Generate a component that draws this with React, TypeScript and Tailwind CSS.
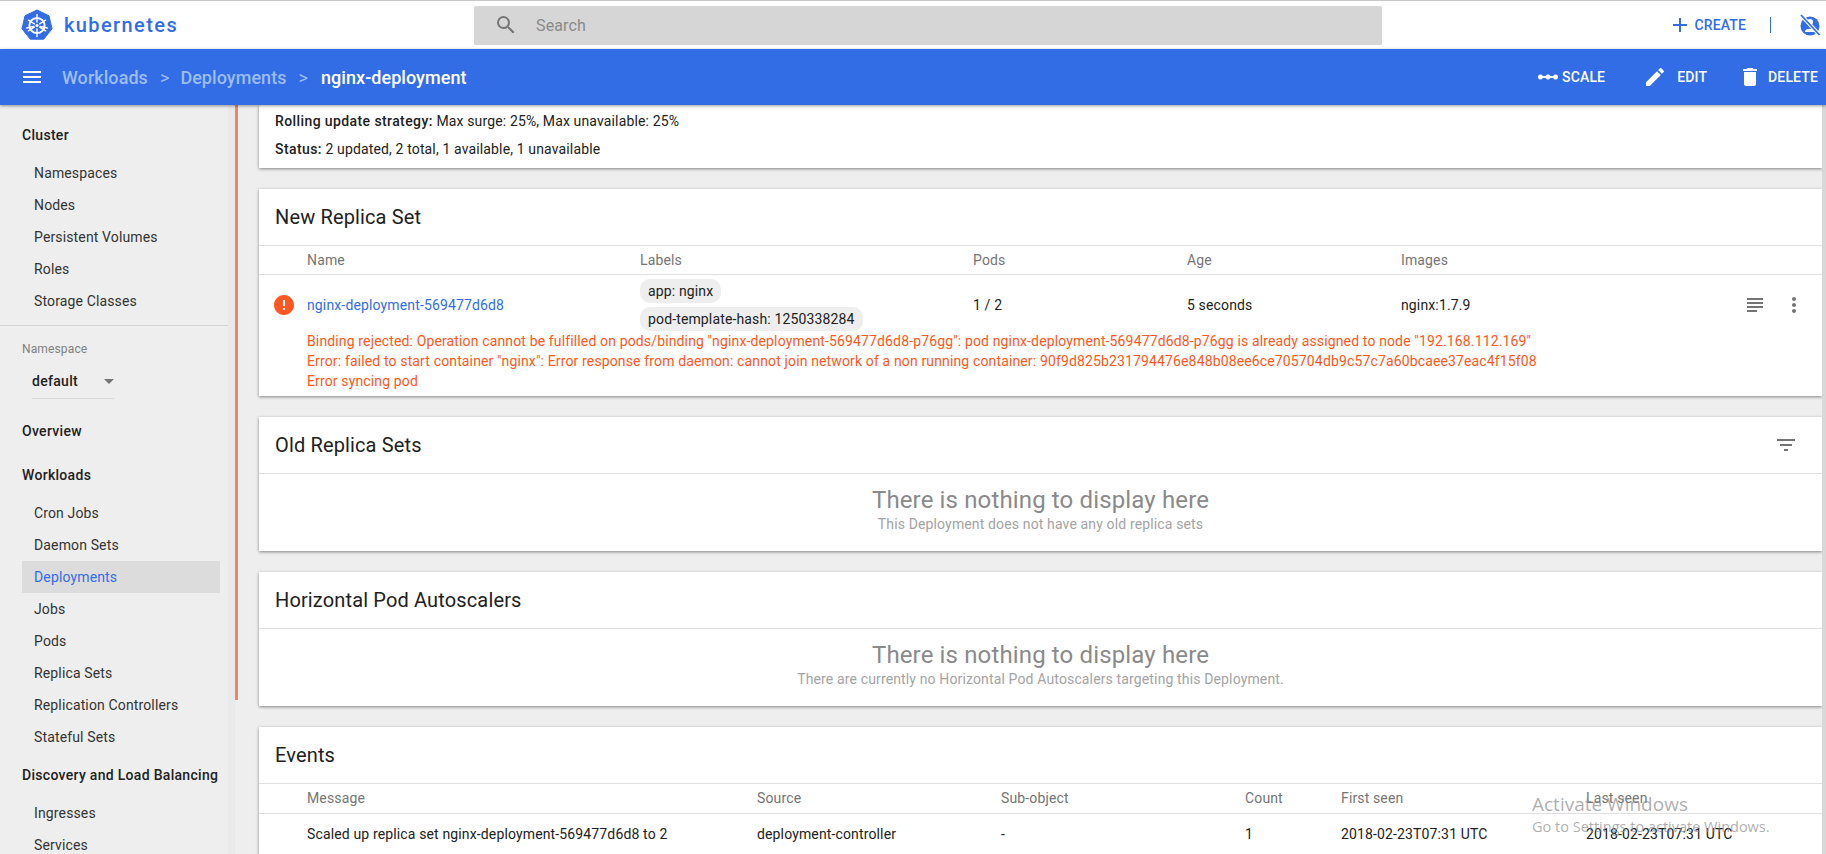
import React from 'react';
import {
  MdAdd,
  MdDelete,
  MdEdit,
  MdError,
  MdFilterList,
  MdLinearScale,
  MdMenu,
  MdMoreVert,
  MdSearch,
  MdSubject,
} from 'react-icons/md';

const KubeLogo = () => (
  <svg viewBox="0 0 32 32" className="w-[32px] h-[32px] shrink-0">
    <path d="M16 1 L28 6.8 L31 19.8 L22.7 30.2 L9.3 30.2 L1 19.8 L4 6.8 Z" fill="#326de6" stroke="#326de6" strokeWidth="1" strokeLinejoin="round" />
    <g stroke="#fff" fill="none" strokeLinecap="round">
      <circle cx="16" cy="16.5" r="7.6" strokeWidth="2" />
      <circle cx="16" cy="16.5" r="1.6" fill="#fff" strokeWidth="0" />
      <path strokeWidth="1.4" d="M16 5.5V13 M16 20v7.5 M7.4 11.2l6 3.6 M18.6 18.2l6 3.6 M24.6 11.2l-6 3.6 M13.4 18.2l-6 3.6 M5.8 19l7-1.6 M26.2 19l-7-1.6" />
    </g>
  </svg>
);

// notifications toggle in the toolbar, a round blob struck through
const NotifyOff = () => (
  <svg viewBox="0 0 24 24" className="w-[24px] h-[24px] shrink-0">
    <circle cx="12" cy="13" r="9.5" fill="#326de6" />
    <circle cx="12" cy="9" r="3" fill="#fff" />
    <path d="M7 18c1-3 9-3 10 0v1H7z" fill="#fff" />
    <path d="M3.5 2.5L21 21.5" stroke="#fff" strokeWidth="4" />
    <path d="M3 2L21.5 22" stroke="#326de6" strokeWidth="1.8" />
  </svg>
);

const NavHead = ({ children, className = '' }: { children: React.ReactNode; className?: string }) => (
  <div className={`pl-[22px] h-[32px] flex items-center font-medium text-[14px] tracking-[0.3px] text-[#212121] ${className}`}>{children}</div>
);

const NavItem = ({ label, active }: { label: string; active?: boolean }) => (
  <div
    className={`ml-[22px] mr-[8px] pl-[12px] h-[32px] flex items-center text-[14px] ${
      active ? 'bg-[#dcdcdc] text-[#326de6]' : 'text-[#333333]'
    }`}
  >
    {label}
  </div>
);

const Card = ({ title, icon, children, className = '' }: { title: string; icon?: React.ReactNode; children: React.ReactNode; className?: string }) => (
  <div className={`bg-white shadow-[0_1px_3px_rgba(0,0,0,0.45)] ${className}`}>
    <div className="h-[57px] px-[16px] flex items-center justify-between border-b border-[#e0e0e0]">
      <div className="text-[20px] text-[#212121]">{title}</div>
      {icon}
    </div>
    {children}
  </div>
);

const Empty = ({ text }: { text: string }) => (
  <div className="h-[77px] flex flex-col items-center pt-[12px]">
    <div className="text-[24px] leading-[28px] text-[#8a8a8a]">There is nothing to display here</div>
    <div className="text-[14px] leading-[18px] mt-[1px] text-[#a3a3a3]">{text}</div>
  </div>
);

const Chip = ({ children }: { children: React.ReactNode }) => (
  <span className="bg-[#eeeeee] rounded-[10px] h-[24px] px-[8px] flex items-center text-[14px] text-[#212121] w-fit">{children}</span>
);

export default function App() {
  return (
    <div className="h-screen w-full flex flex-col overflow-hidden bg-[#eeeeee] text-[14px] tracking-[0.14px] relative" style={{ fontFamily: 'Roboto, sans-serif' }}>
      {/* top toolbar */}
      <div className="h-[49px] shrink-0 bg-white border-t border-[#c8c8c8] flex items-center pl-[21px] pr-[4px]">
        <KubeLogo />
        <span className="ml-[11px] text-[20px] font-medium text-[#326de6] w-[410px] tracking-[1.4px]">kubernetes</span>
        <div className="w-[908px] h-[39px] bg-[#d6d6d6] rounded-[2px] flex items-center pl-[20px] text-[#757575]">
          <MdSearch size={24} />
          <span className="ml-[18px] text-[16px] text-[#8a8a8a] pt-[1px]">Search</span>
        </div>
        <div className="ml-auto flex items-center text-[#326de6]">
          <MdAdd size={24} className="mr-[2px]" />
          <span className="font-medium text-[14px] mr-[24px]">CREATE</span>
          <span className="w-[1px] h-[16px] bg-[#326de6] mr-[27px]" />
          <NotifyOff />
        </div>
      </div>

      {/* blue action bar */}
      <div className="h-[56px] shrink-0 bg-[#326de6] shadow-[0_1px_3px_rgba(0,0,0,0.4)] z-10 flex items-center pl-[20px] pr-[8px] text-white">
        <MdMenu size={24} className="mr-[18px]" />
        <div className="flex items-center text-[18px] tracking-[0.05px]">
          <span className="font-medium text-[#9dbcf5]">Workloads</span>
          <span className="text-[#9dbcf5] ml-[12px] mr-[11px]">&gt;</span>
          <span className="font-medium text-[#9dbcf5]">Deployments</span>
          <span className="text-[#9dbcf5] ml-[12px] mr-[13px]">&gt;</span>
          <span className="font-medium">nginx-deployment</span>
        </div>
        <div className="ml-auto flex items-center font-medium text-[14px]">
          <MdLinearScale size={24} className="mr-[2px]" />
          <span className="mr-[38px]">SCALE</span>
          <MdEdit size={24} className="mr-[10px]" />
          <span className="mr-[31px]">EDIT</span>
          <MdDelete size={24} className="mr-[6px]" />
          <span>DELETE</span>
        </div>
      </div>

      <div className="flex-1 flex min-h-0">
        {/* sidebar */}
        <div className="w-[235px] shrink-0 overflow-hidden flex bg-[#e9e9e9]">
          <div className="w-[228px] shrink-0 bg-[#eeeeee] pt-[14px]">
            <NavHead>Cluster</NavHead>
            <div className="mt-[6px]">
              {['Namespaces', 'Nodes', 'Persistent Volumes', 'Roles', 'Storage Classes'].map((n) => (
                <NavItem key={n} label={n} />
              ))}
            </div>
            <div className="border-t border-[#d4d4d4] mt-[8px] mb-[15px]" />
            <div className="pl-[22px] text-[12px] leading-[16px] text-[#7f7f7f]">Namespace</div>
            <div className="ml-[32px] w-[82px] h-[33px] mt-[9px] border-b border-[#dadada] flex items-center justify-between pb-[2px] font-medium tracking-[0.3px] text-[#212121]">
              default
              <span className="w-0 h-0 border-x-[5px] border-x-transparent border-t-[5px] border-t-[#757575]" />
            </div>
            <NavHead className="mt-[16px]">Overview</NavHead>
            <NavHead className="mt-[12px]">Workloads</NavHead>
            <div className="mt-[6px]">
              {['Cron Jobs', 'Daemon Sets', 'Deployments', 'Jobs', 'Pods', 'Replica Sets', 'Replication Controllers', 'Stateful Sets'].map((n) => (
                <NavItem key={n} label={n} active={n === 'Deployments'} />
              ))}
            </div>
            <NavHead className="mt-[6px]">Discovery and Load Balancing</NavHead>
            <div className="mt-[6px]">
              {['Ingresses', 'Services'].map((n) => (
                <NavItem key={n} label={n} />
              ))}
            </div>
          </div>
        </div>
        <div className="w-[3px] h-[595px] shrink-0 bg-[#e8866a]" />

        {/* content */}
        <div className="flex-1 min-w-0 overflow-hidden pl-[21px] flex flex-col gap-[21px] border-r-[4px] border-[#d8d8d8]">
          <div className="bg-white shadow-[0_1px_3px_rgba(0,0,0,0.45)] h-[63px] shrink-0 px-[16px] text-[#212121]">
            <div className="leading-[20px] pt-[6px]">
              <b className="font-medium tracking-[0.4px]">Rolling update strategy:</b> Max surge: 25%, Max unavailable: 25%
            </div>
            <div className="leading-[20px] mt-[8px]">
              <b className="font-medium tracking-[0.4px]">Status:</b> 2 updated, 2 total, 1 available, 1 unavailable
            </div>
          </div>

          <Card title="New Replica Set" className="shrink-0">
            <div className="grid grid-cols-[48px_333px_333px_214px_214px_1fr] h-[29px] items-center border-b border-[#e0e0e0] text-[#757575]">
              <span />
              <span>Name</span>
              <span>Labels</span>
              <span>Pods</span>
              <span>Age</span>
              <span>Images</span>
            </div>
            <div className="grid grid-cols-[48px_333px_333px_214px_214px_1fr] h-[56px] pt-[4px] items-center text-[#212121] relative">
              <MdError size={24} className="ml-[13px] text-[#ff5722]" />
              <span className="text-[#326de6]">nginx-deployment-569477d6d8</span>
              <div className="flex flex-col gap-[4px]">
                <Chip>app: nginx</Chip>
                <Chip>pod-template-hash: 1250338284</Chip>
              </div>
              <span>1 / 2</span>
              <span>5 seconds</span>
              <span>nginx:1.7.9</span>
              <div className="absolute right-[16px] top-[18px] flex items-center gap-[15px] text-[#757575]">
                <MdSubject size={24} />
                <MdMoreVert size={24} />
              </div>
            </div>
            <div className="pl-[48px] pb-[5px] text-[#ff5722] leading-[20px]">
              <div>Binding rejected: Operation cannot be fulfilled on pods/binding "nginx-deployment-569477d6d8-p76gg": pod nginx-deployment-569477d6d8-p76gg is already assigned to node "192.168.112.169"</div>
              <div>Error: failed to start container "nginx": Error response from daemon: cannot join network of a non running container: 90f9d825b231794476e848b08ee6ce705704db9c57c7a60bcaee37eac4f15f08</div>
              <div>Error syncing pod</div>
            </div>
          </Card>

          <Card title="Old Replica Sets" className="shrink-0" icon={<MdFilterList size={24} className="text-[#757575] mr-[8px]" />}>
            <Empty text="This Deployment does not have any old replica sets" />
          </Card>

          <Card title="Horizontal Pod Autoscalers" className="shrink-0">
            <Empty text="There are currently no Horizontal Pod Autoscalers targeting this Deployment." />
          </Card>

          <Card title="Events" className="shrink-0">
            <div className="grid grid-cols-[48px_450px_244px_244px_96px_245px_1fr] h-[30px] items-center border-b border-[#e0e0e0] text-[#757575]">
              <span />
              <span>Message</span>
              <span>Source</span>
              <span>Sub-object</span>
              <span>Count</span>
              <span>First seen</span>
              <span>Last seen</span>
            </div>
            <div className="grid grid-cols-[48px_450px_244px_244px_96px_245px_1fr] h-[41px] items-center border-b border-[#e0e0e0] text-[#212121]">
              <span />
              <span>Scaled up replica set nginx-deployment-569477d6d8 to 2</span>
              <span>deployment-controller</span>
              <span>-</span>
              <span>1</span>
              <span>2018-02-23T07:31 UTC</span>
              <span>2018-02-23T07:31 UTC</span>
            </div>
          </Card>
        </div>
      </div>

      {/* windows watermark */}
      <div className="absolute left-[1532px] top-[791px] text-[#8c8c8c]/70 pointer-events-none tracking-normal" style={{ fontFamily: '"Open Sans", sans-serif' }}>
        <div className="text-[19px] leading-[26px]">Activate Windows</div>
        <div className="text-[14.5px] leading-[18px] mt-[1px]">Go to Settings to activate Windows.</div>
      </div>
    </div>
  );
}
